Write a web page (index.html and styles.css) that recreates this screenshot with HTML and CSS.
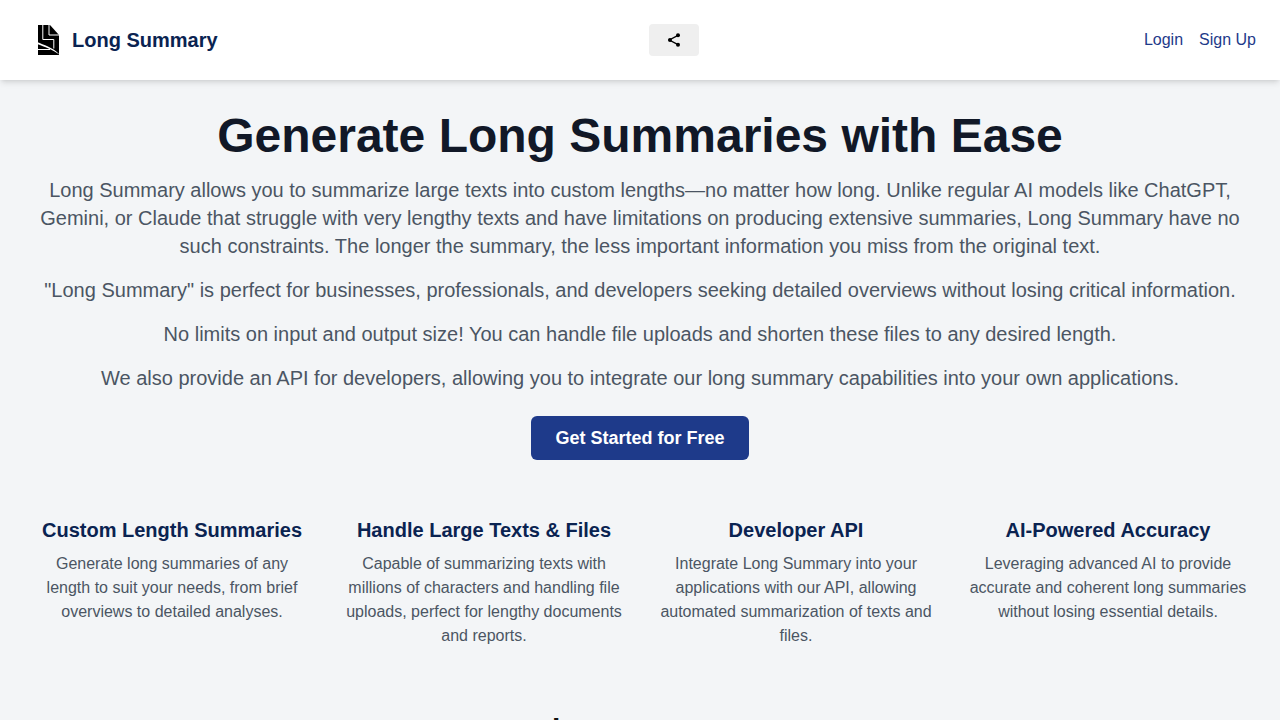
FILE: index.html
```html
<!DOCTYPE html>
<html lang="en">
<head>
    <meta charset="UTF-8">
    <meta name="viewport" content="width=device-width, initial-scale=1.0">
    <title>Long Summary</title>
    <link rel="stylesheet" href="styles.css">
</head>
<body>
    <header class="navbar">
        <a href="#" class="brand">
            <svg class="brand-logo" viewBox="0 0 48 32" aria-hidden="true">
                <path d="M14 1h12l9 10v20H14z" fill="#000"/>
                <path d="M25 0v11h11" fill="none" stroke="#fff" stroke-width="1"/>
                <path d="M18.800 1v14.500h11v9" fill="none" stroke="#fff" stroke-width="1"/>
                <path d="M13 18c7 3 15 5 22 12l1 1c-8-6-15-8-23-11z" fill="#fff"/>
                <path d="M14 25.500h12" stroke="#fff" stroke-width="1"/>
            </svg>
            <span class="brand-name">Long Summary</span>
        </a>
        <button type="button" class="share-btn" aria-label="Share">
            <svg viewBox="0 0 24 24" width="16" height="16" aria-hidden="true">
                <path d="M18 5L5 12l13 7" fill="none" stroke="#000" stroke-width="2"/>
                <circle cx="18" cy="5" r="3"/>
                <circle cx="6" cy="12" r="3"/>
                <circle cx="18" cy="19" r="3"/>
            </svg>
        </button>
        <nav class="nav-links">
            <a href="#">Login</a>
            <a href="#">Sign Up</a>
        </nav>
    </header>

    <main class="container">
        <section class="hero">
            <h1>Generate Long Summaries with Ease</h1>
            <p>Long Summary allows you to summarize large texts into custom lengths—no matter how long. Unlike regular AI models like ChatGPT, Gemini, or Claude that struggle with very lengthy texts and have limitations on producing extensive summaries, Long Summary have no such constraints. The longer the summary, the less important information you miss from the original text.</p>
            <p>"Long Summary" is perfect for businesses, professionals, and developers seeking detailed overviews without losing critical information.</p>
            <p>No limits on input and output size! You can handle file uploads and shorten these files to any desired length.</p>
            <p>We also provide an API for developers, allowing you to integrate our long summary capabilities into your own applications.</p>
            <button type="button" class="cta-btn">Get Started for Free</button>
        </section>

        <section class="features">
            <div class="feature">
                <h2>Custom Length Summaries</h2>
                <p>Generate long summaries of any length to suit your needs, from brief overviews to detailed analyses.</p>
            </div>
            <div class="feature">
                <h2>Handle Large Texts &amp; Files</h2>
                <p>Capable of summarizing texts with millions of characters and handling file uploads, perfect for lengthy documents and reports.</p>
            </div>
            <div class="feature">
                <h2>Developer API</h2>
                <p>Integrate Long Summary into your applications with our API, allowing automated summarization of texts and files.</p>
            </div>
            <div class="feature">
                <h2>AI-Powered Accuracy</h2>
                <p>Leveraging advanced AI to provide accurate and coherent long summaries without losing essential details.</p>
            </div>
        </section>

        <section class="demo">
            <h2>Watch Our Demo Here</h2>
        </section>
    </main>
</body>
</html>
```
FILE: styles.css
```css
* {
    margin: 0;
    padding: 0;
    box-sizing: border-box;
}

body {
    font-family: 'Liberation Sans', Arial, sans-serif;
    font-size: 16px;
    line-height: 24px;
    background: #f3f5f7;
    color: #111827;
}

a {
    text-decoration: none;
}

.navbar {
    display: flex;
    justify-content: space-between;
    align-items: center;
    padding: 24px;
    background: #fff;
    box-shadow: 0 4px 6px -1px rgba(0, 0, 0, 0.1), 0 2px 4px -2px rgba(0, 0, 0, 0.1);
}

.brand {
    display: flex;
    align-items: center;
}

.brand-logo {
    width: 48px;
    height: 32px;
}

.brand-name {
    font-size: 20px;
    line-height: 28px;
    font-weight: bold;
    color: #0a2351;
}

.share-btn {
    display: flex;
    align-items: center;
    justify-content: center;
    width: 50px;
    height: 32px;
    margin-right: 14px;
    border: none;
    border-radius: 4px;
    background: #efefef;
    cursor: pointer;
}

.nav-links {
    display: flex;
    gap: 16px;
}

.nav-links a {
    color: #1e3a8a;
}

.container {
    padding: 32px 16px;
}

.hero {
    padding: 0 16px;
    text-align: center;
}

.hero h1 {
    margin-bottom: 16px;
    font-size: 48px;
    line-height: 48px;
}

.hero p {
    margin-bottom: 16px;
    font-size: 20px;
    line-height: 28px;
    color: #4b5563;
}

.cta-btn {
    margin-top: 8px;
    padding: 8px 24px;
    border: none;
    border-radius: 6px;
    background: #1e3a8a;
    color: #fff;
    font-family: inherit;
    font-size: 18px;
    line-height: 28px;
    font-weight: bold;
    cursor: pointer;
}

.features {
    display: grid;
    grid-template-columns: repeat(4, 1fr);
    margin-top: 40px;
    text-align: center;
}

.feature {
    padding: 16px;
}

.feature h2 {
    margin-bottom: 8px;
    font-size: 20px;
    line-height: 28px;
    color: #0a2351;
}

.feature p {
    color: #4b5563;
}

.demo {
    margin-top: 48px;
    text-align: center;
}

.demo h2 {
    font-size: 30px;
    line-height: 36px;
    color: #111;
}

@media (max-width: 900px) {
    .features {
        grid-template-columns: repeat(2, 1fr);
    }

    .hero h1 {
        font-size: 36px;
    }
}
```
